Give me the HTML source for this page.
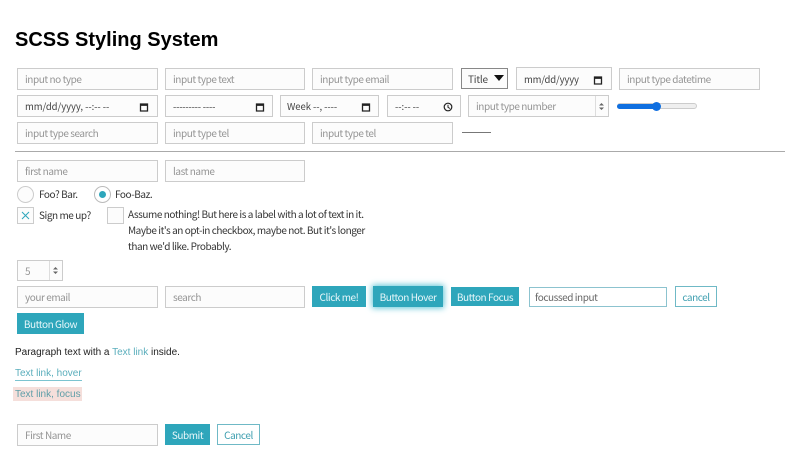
<!DOCTYPE html>
<html><head><meta charset="utf-8"><style>
html,body{margin:0;padding:0;background:#fff}
body{width:800px;height:450px;overflow:hidden;position:relative;font-family:"Noto Sans CJK JP","Liberation Sans",sans-serif;font-size:10px;letter-spacing:-.44px;color:#333;filter:blur(.3px)}
.a{position:absolute;white-space:nowrap;box-sizing:border-box}
.i{border:1px solid #ccc;background:#fcfcfc;color:#949494;height:22px;line-height:20px;padding-left:7px}
.d{color:#444;letter-spacing:-.05px;font-size:9.5px;line-height:21px}
.b{background:#2ea6bb;color:#e8f7fa;text-align:center;height:22px;line-height:21px}
.o{border:1px solid #6fb9c6;color:#3f9fb0;background:#fff;text-align:center;height:22px;line-height:19px}
.s{font-family:"Liberation Sans",sans-serif;letter-spacing:0}
svg{position:absolute}
</style></head><body>
<div class="a s" style="left:15px;top:27px;font-size:20px;font-weight:bold;color:#000;line-height:26px">SCSS Styling System</div>

<div class="a i" style="left:17px;top:68px;width:141px">input no type</div>
<div class="a i" style="left:165px;top:68px;width:140px">input type text</div>
<div class="a i" style="left:312px;top:68px;width:141px">input type email</div>
<div class="a" style="left:461px;top:68px;width:47px;height:21px;border:1px solid #888;background:#fcfcfc;line-height:19px;padding-left:6px;color:#444;letter-spacing:-.2px">Title<svg style="left:32px;top:6px" width="10" height="6"><path d="M0 0H10L5 6Z" fill="#111"/></svg></div>
<div class="a i d" style="left:516px;top:67px;width:96px;height:23px;line-height:22px;letter-spacing:-.15px">mm/dd/yyyy<svg style="left:76px;top:7px" width="10" height="10"><path d="M1.500 2H8.500V9H1.500ZM1.500 3.200H8.500" fill="none" stroke="#222" stroke-width="1.300"/></svg></div>
<div class="a i" style="left:619px;top:68px;width:141px">input type datetime</div>

<div class="a i d" style="left:17px;top:95px;width:141px">mm/dd/yyyy, --:-- --<svg style="left:121px;top:6px" width="10" height="10"><path d="M1.500 2H8.500V9H1.500ZM1.500 3.200H8.500" fill="none" stroke="#222" stroke-width="1.300"/></svg></div>
<div class="a i d" style="left:165px;top:95px;width:108px;letter-spacing:-.2px">--------- ----<svg style="left:89px;top:6px" width="10" height="10"><path d="M1.500 2H8.500V9H1.500ZM1.500 3.200H8.500" fill="none" stroke="#222" stroke-width="1.300"/></svg></div>
<div class="a i d" style="left:280px;top:95px;width:99px;padding-left:6px">Week --, ----<svg style="left:80px;top:6px" width="10" height="10"><path d="M1.500 2H8.500V9H1.500ZM1.500 3.200H8.500" fill="none" stroke="#222" stroke-width="1.300"/></svg></div>
<div class="a i d" style="left:387px;top:95px;width:74px">--:-- --<svg style="left:54px;top:5px" width="12" height="12"><circle cx="6" cy="6" r="3.800" fill="none" stroke="#222" stroke-width="1.200"/><path d="M6 3.800V6.300L8 7.500" fill="none" stroke="#222"/></svg></div>
<div class="a i" style="left:468px;top:95px;width:141px">input type number<div class="a" style="left:126px;top:0;width:1px;height:20px;background:#ddd"></div><svg style="left:130px;top:6px" width="5" height="9"><path d="M0 3.500L2.500 1L5 3.500ZM0 5.500L2.500 8L5 5.500Z" fill="#666"/></svg></div>
<div class="a" style="left:617px;top:103px;width:80px;height:6px;border:1px solid #ccc;border-radius:3px;background:#efefef"></div>
<div class="a" style="left:617px;top:104px;width:40px;height:5px;border-radius:3px;background:#0f6fe0"></div>
<div class="a" style="left:652px;top:102px;width:9px;height:9px;border-radius:50%;background:#0f6fe0"></div>

<div class="a i" style="left:17px;top:122px;width:141px">input type search</div>
<div class="a i" style="left:165px;top:122px;width:140px">input type tel</div>
<div class="a i" style="left:312px;top:122px;width:141px">input type tel</div>
<div class="a" style="left:462px;top:132px;width:29px;height:1px;background:#777"></div>
<div class="a" style="left:15px;top:151px;width:770px;height:1px;background:#aaa"></div>

<div class="a i" style="left:17px;top:160px;width:141px">first name</div>
<div class="a i" style="left:165px;top:160px;width:140px">last name</div>

<div class="a" style="left:17px;top:186px;width:17px;height:17px;border:1px solid #ccc;border-radius:50%;background:#fcfcfc"></div>
<div class="a" style="left:39px;top:186px;line-height:16px">Foo? Bar.</div>
<div class="a" style="left:94px;top:186px;width:17px;height:17px;border:1px solid #bbb;border-radius:50%;background:#fff"></div>
<div class="a" style="left:99px;top:191px;width:7px;height:7px;border-radius:50%;background:#2ea6bb"></div>
<div class="a" style="left:115px;top:186px;line-height:16px">Foo-Baz.</div>

<div class="a" style="left:17px;top:207px;width:17px;height:17px;border:1px solid #ccc;background:#fcfcfc"><svg style="left:3px;top:3px" width="9" height="9"><path d="M1 1L8 8M8 1L1 8" stroke="#2ea6bb" stroke-width="1"/></svg></div>
<div class="a" style="left:39px;top:207px;line-height:16px">Sign me up?</div>
<div class="a" style="left:107px;top:207px;width:17px;height:17px;border:1px solid #ccc;background:#fcfcfc"></div>
<div class="a" style="left:128px;top:206px;line-height:16px">Assume nothing! But here is a label with a lot of text in it.<br>Maybe it's an opt-in checkbox, maybe not. But it's longer<br>than we'd like. Probably.</div>

<div class="a i" style="left:17px;top:260px;width:46px;height:21px;line-height:19px">5<div class="a" style="left:31px;top:0;width:1px;height:19px;background:#ddd"></div><svg style="left:35px;top:5px" width="5" height="9"><path d="M0 3.500L2.500 1L5 3.500ZM0 5.500L2.500 8L5 5.500Z" fill="#666"/></svg></div>

<div class="a i" style="left:17px;top:286px;width:141px">your email</div>
<div class="a i" style="left:165px;top:286px;width:140px">search</div>
<div class="a b" style="left:312px;top:286px;width:54px;height:21px;line-height:21px">Click me!</div>
<div class="a b" style="left:373px;top:286px;width:70px;height:21px;line-height:21px;box-shadow:0 0 6px 1px #5cc4d6">Button Hover</div>
<div class="a b" style="left:451px;top:287px;width:68px;height:19px;line-height:19px">Button Focus</div>
<div class="a i" style="left:529px;top:287px;width:138px;height:20px;line-height:18px;border-color:#8cc3cf;background:#fff;padding-left:5px;color:#666">focussed input</div>
<div class="a o" style="left:675px;top:286px;width:42px;height:21px;line-height:19px">cancel</div>

<div class="a b" style="left:17px;top:313px;width:67px;height:21px;line-height:21px">Button Glow</div>

<div class="a s" style="left:15px;top:346px;font-size:10px;line-height:14px;color:#222">Paragraph text with a <span style="color:#5aaebc">Text link</span> inside.</div>
<div class="a s" style="left:15px;top:367px;font-size:10px;line-height:13px;color:#5aaebc;border-bottom:1px solid #7cc4d0">Text link, hover</div>
<div class="a s" style="left:13px;top:387px;padding:1px 0 0 2px;width:69px;height:14px;font-size:10px;line-height:14px;color:#5f9ea8;background:#f5dfdb">Text link, focus</div>

<div class="a i" style="left:17px;top:424px;width:141px">First Name</div>
<div class="a b" style="left:165px;top:424px;width:45px;height:21px;line-height:21px">Submit</div>
<div class="a o" style="left:217px;top:424px;width:43px;height:21px;line-height:19px">Cancel</div>
</body></html>
